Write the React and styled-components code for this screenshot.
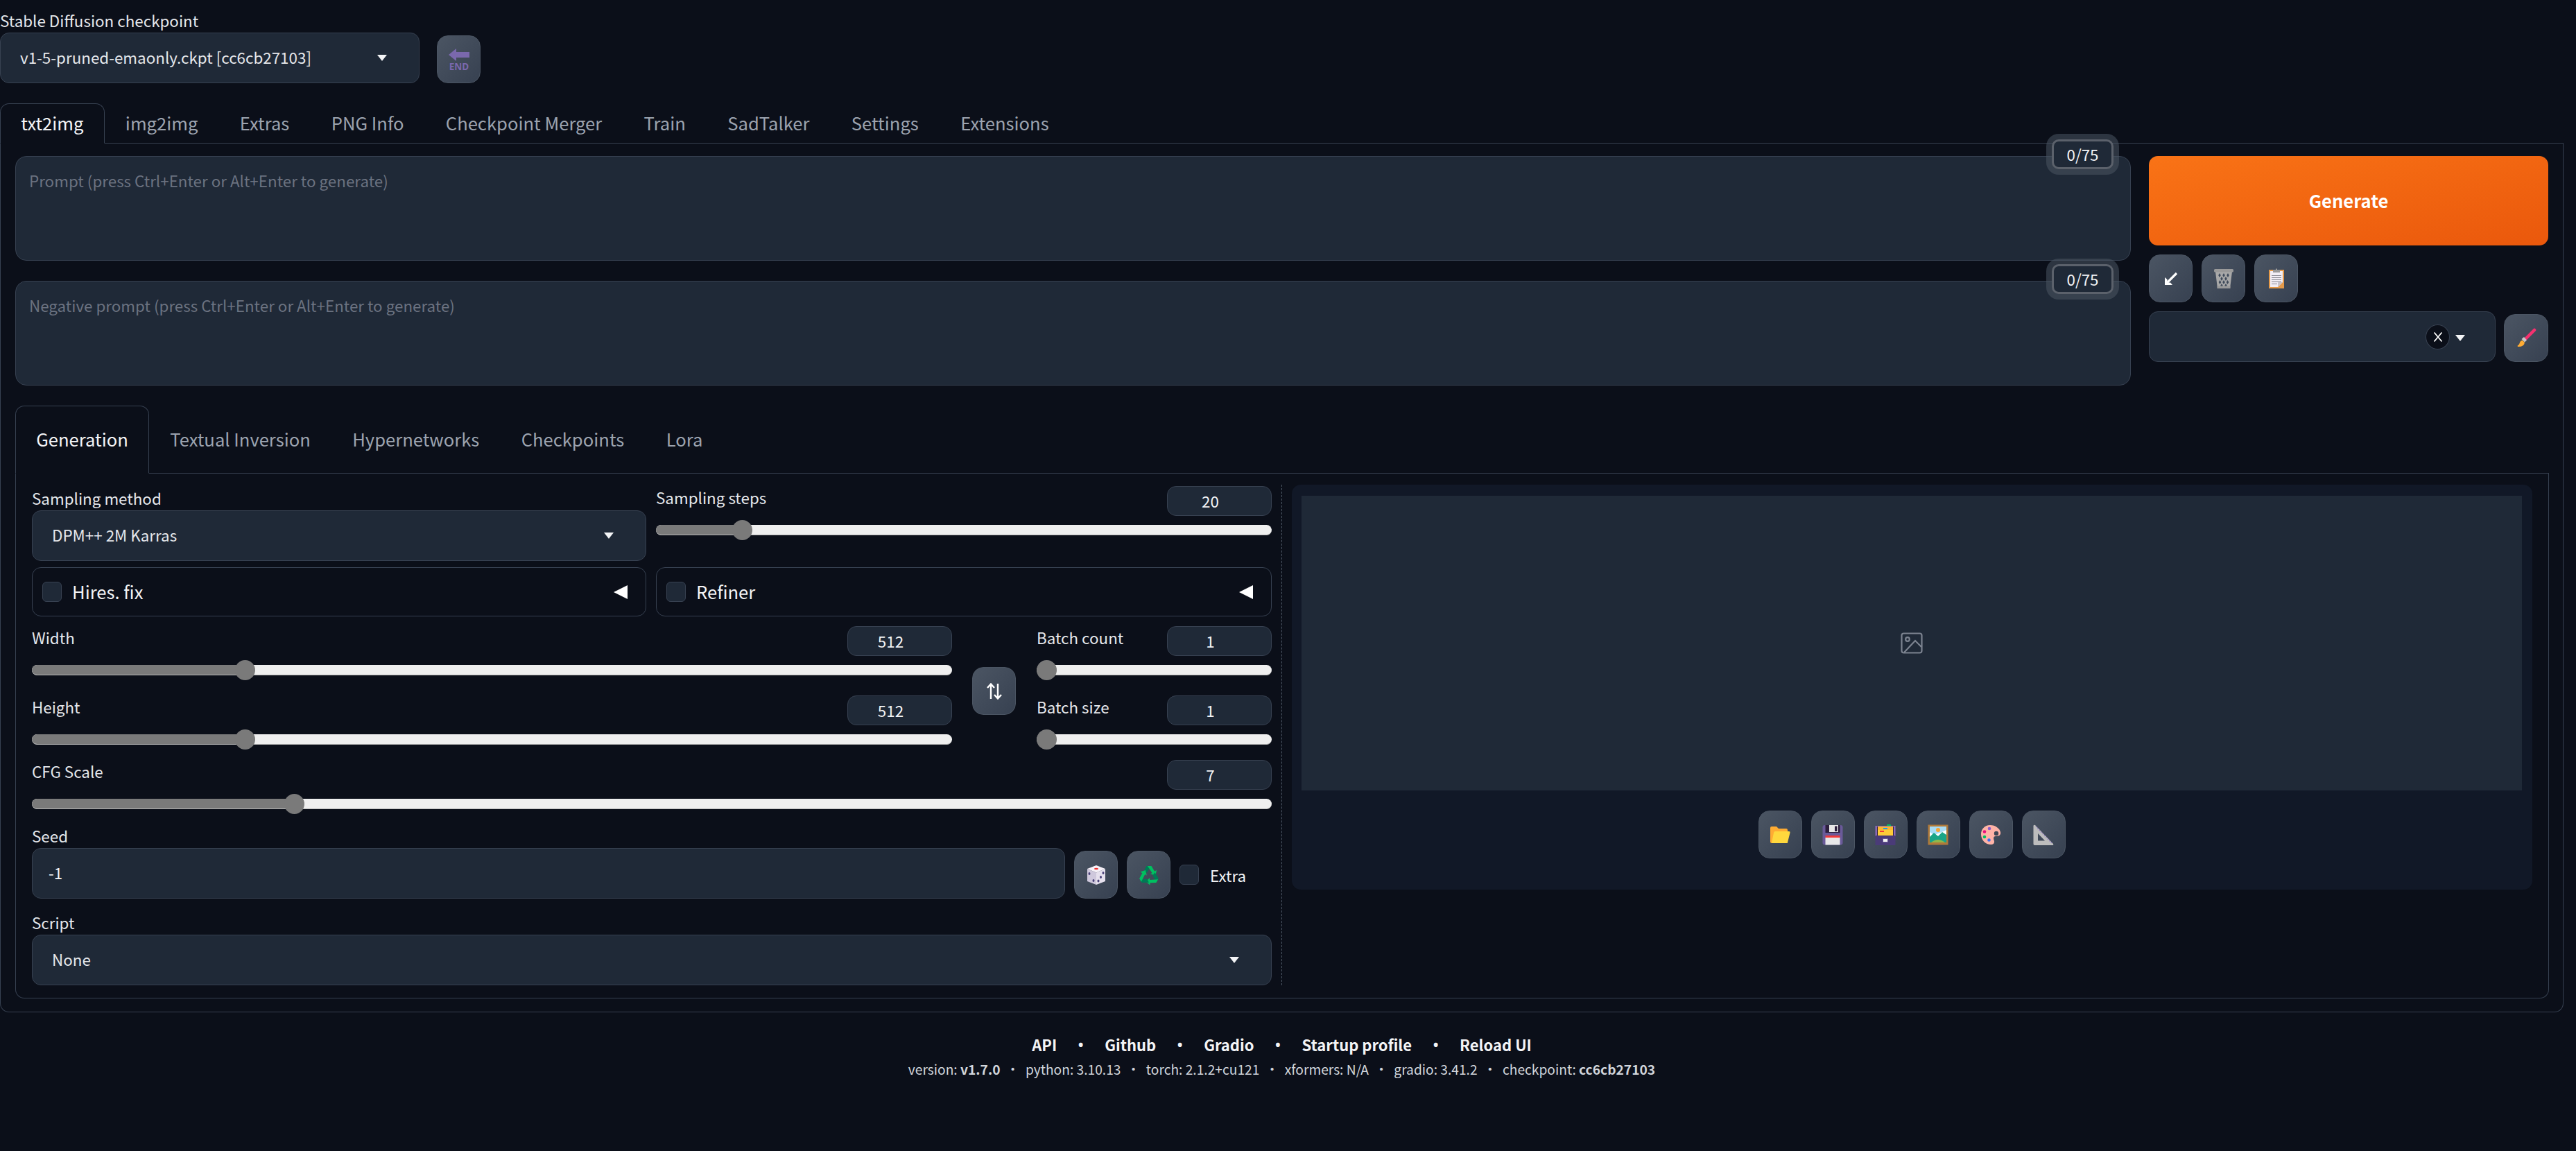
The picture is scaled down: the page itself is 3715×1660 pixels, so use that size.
import React from 'react';
import styled, { createGlobalStyle } from 'styled-components';

const GlobalStyle = createGlobalStyle`
    html, body {
        margin: 0;
        padding: 0;
        background: #0b0f19;
    }
    body {
        width: 3715px;
        height: 1660px;
        overflow: hidden;
        font-family: "Noto Sans CJK SC", "Noto Sans", sans-serif;
        font-size: 22.4px;
        color: #e5e7eb;
    }
    * {
        box-sizing: border-box;
    }
`;

const Page = styled.div`
    padding-top: 18px;
`;

const Label = styled.div`
    padding-bottom: 5px;
    line-height: 23px;
    margin-bottom: 1px;
    white-space: nowrap;
`;

const TopRow = styled.div`
    display: flex;
    align-items: flex-end;
    gap: 25px;
`;

const Select = styled.div`
    display: flex;
    align-items: center;
    justify-content: space-between;
    width: ${props => props.$width || '100%'};
    height: 73px;
    padding: 0 ${props => props.$right || 46}px 3px 28px;
    background: #1f2937;
    border: 1px solid #374151;
    border-radius: 13px;
    color: #e5e7eb;
    white-space: nowrap;
`;

const Caret = styled.span`
    width: 0;
    height: 0;
    margin-top: 3px;
    border-left: 7px solid transparent;
    border-right: 7px solid transparent;
    border-top: 9px solid #f3f4f6;
`;

const ToolButton = styled.button`
    display: flex;
    align-items: center;
    justify-content: center;
    flex: none;
    width: ${props => props.$width || 63}px;
    height: 69px;
    padding: 0;
    background: linear-gradient(to bottom right, #4b5563, #374151);
    border: 1px solid #4b5563;
    border-radius: 16px;
`;

const TabBar = styled.div`
    display: flex;
    height: ${props => props.$height}px;
    margin-top: ${props => props.$top}px;
    margin-right: ${props => props.$outdent || 0}px;
    border-bottom: 1px solid #374151;
`;

const Tab = styled.div`
    display: flex;
    align-items: center;
    height: ${props => props.$height}px;
    padding: 0 29.2px 3px;
    font-size: 25.6px;
    white-space: nowrap;
    color: ${props => props.$active ? '#f3f4f6' : '#9ca3af'};
    border: 1px solid ${props => props.$active ? '#374151' : 'transparent'};
    border-bottom: 1px solid ${props => props.$active ? '#0b0f19' : 'transparent'};
    border-radius: 13px 13px 0 0;
`;

const Panel = styled.div`
    width: 3697px;
    padding: 18px 20px 19px 21px;
    border: 1px solid #374151;
    border-top: 0;
    border-radius: 0 0 13px 13px;
`;

const PromptRow = styled.div`
    display: flex;
    gap: 26px;
`;

const PromptColumn = styled.div`
    display: flex;
    flex-direction: column;
    gap: 29px;
    width: 3051px;
`;

const PromptBox = styled.div`
    position: relative;
    height: 151px;
`;

const PromptArea = styled.textarea`
    display: block;
    width: 100%;
    height: 100%;
    padding: 21px 19px;
    resize: none;
    font: inherit;
    line-height: 26px;
    color: #e5e7eb;
    background: #1f2937;
    border: 1px solid #374151;
    border-radius: 16px;
    outline: none;
    &::placeholder {
        color: #6b7280;
        opacity: 1;
    }
`;

const TokenCounter = styled.div`
    position: absolute;
    top: -24px;
    right: 25px;
    display: flex;
    align-items: center;
    justify-content: center;
    width: 89px;
    height: 43px;
    padding-bottom: 2px;
    background: #1f2937;
    border: 3px solid #5b616b;
    border-radius: 10px;
    box-shadow: 0 0 0 8px rgba(75, 85, 99, 0.55);
    color: #f3f4f6;
`;

const ActionColumn = styled.div`
    display: flex;
    flex-direction: column;
    gap: 13px;
    width: 576px;
`;

const GenerateButton = styled.button`
    height: 129px;
    padding: 0 0 3px;
    font: inherit;
    font-size: 25.6px;
    font-weight: 600;
    color: #fff;
    background: linear-gradient(to bottom right, #f97316, #ea580c);
    border: 0;
    border-radius: 13px;
`;

const ToolRow = styled.div`
    display: flex;
    align-items: flex-end;
    gap: ${props => props.$gap}px;
`;

const StyleControls = styled.div`
    display: flex;
    align-items: center;
    gap: 8px;
    margin-top: 3px;
`;

const ClearButton = styled.span`
    display: flex;
    align-items: center;
    justify-content: center;
    width: 35px;
    height: 36px;
    background: #0b0f19;
    border: 1px solid #374151;
    border-radius: 50%;
`;

const SubPanel = styled.div`
    display: flex;
    padding: 16px 23px 18px 23px;
    border: 1px solid #374151;
    border-top: 0;
    border-radius: 0 0 13px 13px;
`;

const SettingsColumn = styled.div`
    flex: none;
    width: 1803px;
    margin-right: 14px;
    padding: 2px 14px 0 0;
    border-right: 1px dashed #4b5563;
`;

const TwoColumns = styled.div`
    display: grid;
    grid-template-columns: 886px 888px;
    gap: 9px 14px;
`;

const SamplerField = styled.div`
    padding-top: 6px;
`;

const Accordion = styled.div`
    display: flex;
    align-items: center;
    height: 71px;
    padding: 0 26px 0 14px;
    border: 1px solid #374151;
    border-radius: 13px;
    font-size: 25.6px;
    color: #f3f4f6;
`;

const AccordionTitle = styled.span`
    position: relative;
    top: -1px;
    margin-left: -1px;
`;

const Checkbox = styled.span`
    flex: none;
    width: 28px;
    height: 29px;
    margin-right: 16px;
    background: #1f2937;
    border: 1px solid #374151;
    border-radius: 6px;
`;

const CollapseMark = styled.span`
    margin-left: auto;
    width: 0;
    height: 0;
    border-top: 10px solid transparent;
    border-bottom: 10px solid transparent;
    border-right: 20px solid #fff;
`;

const SliderField = styled.div`
    margin-top: ${props => props.$top || 0}px;
`;

const SliderHead = styled.div`
    display: flex;
    align-items: center;
    justify-content: space-between;
    height: 43px;
    margin-bottom: 6px;
`;

const SliderLabel = styled.span`
    padding-bottom: 11px;
`;

const NumberBox = styled.div`
    display: flex;
    align-items: center;
    justify-content: center;
    width: 151px;
    height: 43px;
    padding: 0 26px 2px 0;
    background: #1f2937;
    border: 1px solid #374151;
    border-radius: 13px;
    color: #f3f4f6;
`;

const SliderRail = styled.div`
    position: relative;
    height: 29px;
`;

const SliderTrack = styled.div`
    position: absolute;
    top: 7px;
    left: 0;
    right: 0;
    height: 15px;
    background: #efefef;
    border-bottom: 1px solid #b5b5b5;
    border-radius: 8px;
    overflow: hidden;
`;

const SliderFill = styled.div`
    height: 100%;
    background: #7a7a7a;
`;

const SliderThumb = styled.div`
    position: absolute;
    top: 0;
    width: 29px;
    height: 29px;
    background: #7a7a7a;
    border-radius: 50%;
`;

const DimensionRow = styled.div`
    display: flex;
    align-items: flex-start;
    margin-top: 14px;
`;

const DimensionColumn = styled.div`
    flex: none;
    width: ${props => props.$width}px;
`;

const SwapSlot = styled.div`
    flex: none;
    margin: 59px 30px 0 29px;
`;

const SeedRow = styled.div`
    display: flex;
    align-items: flex-end;
    gap: 13px;
`;

const SeedInput = styled.div`
    display: flex;
    align-items: center;
    width: 1490px;
    height: 73px;
    padding: 0 0 3px 23px;
    background: #1f2937;
    border: 1px solid #374151;
    border-radius: 13px;
    color: #f3f4f6;
`;

const ExtraToggle = styled.div`
    display: flex;
    align-items: center;
    height: 69px;
    font-size: 22.4px;
    color: #f3f4f6;
`;

const FieldGroup = styled.div`
    margin-top: ${props => props.$top}px;
`;

const OutputPanel = styled.div`
    flex: none;
    width: 1789px;
    height: 584px;
    padding: 16px 15px 0 14px;
    background: #111827;
    border-radius: 13px;
`;

const ImagePlaceholder = styled.div`
    display: flex;
    align-items: center;
    justify-content: center;
    height: 425px;
    background: #1f2937;
`;

const OutputTools = styled.div`
    display: flex;
    justify-content: center;
    gap: 13px;
    margin-top: 29px;
`;

const Footer = styled.footer`
    margin-top: 33px;
    width: 3697px;
    text-align: center;
`;

const FooterLinks = styled.div`
    display: flex;
    justify-content: center;
    gap: 30px;
    height: 27px;
    line-height: 27px;
    font-size: 22px;
    font-weight: 600;
    color: #f3f4f6;
`;

const FooterDot = styled.span`
    width: 9px;
    font-family: "Noto Sans", sans-serif;
    text-align: center;
`;

const Versions = styled.div`
    margin-top: 10px;
    line-height: 24px;
    font-size: 19.2px;
    color: #d1d5db;
`;

const Slider = ({ pct }) => (
    <SliderRail>
        <SliderTrack>
            <SliderFill style={{ width: `${pct}%` }} />
        </SliderTrack>
        <SliderThumb style={{ left: `calc((100% - 29px) * ${pct / 100})` }} />
    </SliderRail>
);

const SliderControl = ({ label, value, pct, top }) => (
    <SliderField $top={top}>
        <SliderHead>
            <SliderLabel>{label}</SliderLabel>
            <NumberBox>{value}</NumberBox>
        </SliderHead>
        <Slider pct={pct} />
    </SliderField>
);

// Emoji in the original, redrawn as small svgs
const EndIcon = () => (
    <svg width="32" height="34" viewBox="0 0 32 34">
        <path d="M1 10 L12 1 V6 H31 V14 H12 V19Z" fill="#7a68ad" />
        <text x="16" y="32" textAnchor="middle" fontSize="13.500" fontWeight="700" fill="#7a68ad" fontFamily="Noto Sans">END</text>
    </svg>
);

const ArrowIcon = () => (
    <svg width="22" height="22" viewBox="0 0 22 22">
        <path d="M19 3 L5 17" stroke="#fff" strokeWidth="3.200" />
        <path d="M2 9 V20 H13 L10 16.500 H5.500 V12Z" fill="#fff" />
    </svg>
);

const TrashIcon = () => (
    <svg width="30" height="30" viewBox="0 0 30 30">
        <path d="M3 5 H27 L24 29 H6Z" fill="#a8a8a8" />
        <g fill="#3f4a5a">
            {[[9, 10], [15, 10], [21, 10], [12, 15], [18, 15], [9.500, 20], [15, 20], [20.500, 20], [12, 25], [18, 25]].map(([x, y]) => (
                <path key={`${x}-${y}`} d={`M${x} ${y - 3} L${x + 1.800} ${y} L${x} ${y + 3} L${x - 1.800} ${y}Z`} />
            ))}
        </g>
        <rect x="1" y="1" width="28" height="4.500" rx="1.500" fill="#9a9a9a" />
        <rect x="5.500" y="25.500" width="19" height="3.500" fill="#9a9a9a" />
    </svg>
);

const ClipboardIcon = () => (
    <svg width="30" height="30" viewBox="0 0 30 30">
        <rect x="4" y="2" width="22" height="27" fill="#e59a4a" />
        <path d="M6 4 H24 V20 L17 27 H6Z" fill="#f2eef6" />
        <path d="M24 20 L17 27 V21 Q17 20 18 20Z" fill="#c9c4cc" />
        <rect x="10" y="2" width="10" height="4" fill="#9a9a9a" />
        <rect x="14" y="0.500" width="2" height="2" fill="#9a9a9a" />
        <g fill="#85858f">
            <rect x="8" y="10" width="14" height="1" />
            <rect x="8" y="13" width="14" height="1" />
            <rect x="8" y="16" width="14" height="1" />
            <rect x="8" y="19" width="14" height="1" />
            <rect x="8" y="22" width="8" height="1" />
        </g>
    </svg>
);

const BrushIcon = () => (
    <svg width="30" height="30" viewBox="0 0 30 30">
        <path d="M27 3 L13 17" stroke="#f5316f" strokeWidth="4.500" strokeLinecap="round" />
        <path d="M8.500 16 L12 13 L16 17.500 L13 20.500Z" fill="#c8c8c8" />
        <path d="M10 18 L13 21 Q12 27 4 27 Q2 27 3 25 Q5.500 24 6 21 Q7 18 10 18Z" fill="#ffac33" />
    </svg>
);

const SwapIcon = () => (
    <svg width="24" height="24" viewBox="0 0 24 24" fill="none" stroke="#fff" strokeWidth="2.400">
        <path d="M7 23 V2 M2 7 L7 1.500 L12 7" />
        <path d="M17 1 V22 M12 17 L17 22.500 L22 17" />
    </svg>
);

const DiceIcon = () => (
    <svg width="30" height="30" viewBox="0 0 30 30">
        <path d="M15 1 L28 6 L15 11.500 L2 6Z" fill="#f6f1f8" />
        <path d="M2 6 L15 11.500 V29 L2 24Z" fill="#cfc8dc" />
        <path d="M28 6 L15 11.500 V29 L28 24Z" fill="#e6e0ed" />
        <ellipse cx="15" cy="6" rx="3" ry="1.300" fill="#f0302f" />
        <g fill="#4b4279">
            <ellipse cx="5" cy="13" rx="1.500" ry="2" />
            <ellipse cx="11" cy="23" rx="1.500" ry="2" />
            <ellipse cx="25" cy="12" rx="1.500" ry="2" />
            <ellipse cx="21.500" cy="18" rx="1.500" ry="2" />
            <ellipse cx="18" cy="23.500" rx="1.500" ry="2" />
        </g>
    </svg>
);

const RecycleArrow = ({ turn }) => (
    <g transform={`rotate(${turn} 15 16)`}>
        <path d="M6.500 11 L11.500 2 H17 L12.500 11.500Z" fill="#007a55" />
        <path d="M13 2 H18.500 L23 9.500 L26 8 L24.500 15.500 L17 13.500 L19.500 12Z" fill="#00c060" />
    </g>
);

const RecycleIcon = () => (
    <svg width="30" height="30" viewBox="0 0 30 30">
        <RecycleArrow turn={0} />
        <RecycleArrow turn={120} />
        <RecycleArrow turn={240} />
    </svg>
);

const FolderIcon = () => (
    <svg width="30" height="30" viewBox="0 0 30 30">
        <path d="M1 5 Q1 3 3 3 H10 L13 6 H24 Q26 6 26 8 V27 H3 Q1 27 1 25Z" fill="#ffac33" />
        <path d="M8 10 H28 Q30 10 29.500 12 L26 26 Q25.500 27 24 27 H3 L6 12 Q6.500 10 8 10Z" fill="#ffd83d" />
    </svg>
);

const FloppyIcon = () => (
    <svg width="30" height="30" viewBox="0 0 30 30">
        <rect x="0.500" y="1" width="29" height="28.500" rx="3" fill="#6a5a99" />
        <rect x="4.500" y="1" width="21" height="11" fill="#2c1f3d" />
        <rect x="10" y="1" width="13" height="10" fill="#e8e8e8" />
        <rect x="18" y="2.500" width="3.500" height="7.500" fill="#2c1f3d" />
        <rect x="4.500" y="16" width="21" height="3" fill="#f03a3a" />
        <rect x="4.500" y="19" width="21" height="10.500" fill="#e8e8e8" />
    </svg>
);

const CardBoxIcon = () => (
    <svg width="30" height="30" viewBox="0 0 30 30">
        <rect x="17" y="0" width="6" height="3" rx="1" fill="#00c060" />
        <rect x="0.500" y="2" width="29" height="15" fill="#8b69b8" />
        <rect x="3" y="3" width="24" height="14" fill="#2c1f3d" />
        <rect x="4" y="3" width="22" height="14" fill="#fbb731" />
        <rect x="4" y="8" width="22" height="9" fill="#ffd83d" opacity="0.600" />
        <rect x="12" y="5" width="6" height="2" fill="#1aa0e8" />
        <rect x="7" y="9" width="6" height="2" fill="#f03a3a" />
        <rect x="0.500" y="16" width="29" height="14" rx="1" fill="#4a3b78" />
        <rect x="11" y="20" width="8" height="6" fill="#6a5a99" />
        <rect x="12" y="21" width="6" height="4" fill="#f2f2f2" />
    </svg>
);

const PictureIcon = () => (
    <svg width="30" height="30" viewBox="0 0 30 30">
        <rect x="0.500" y="0.500" width="29" height="29" fill="#b07a3a" />
        <rect x="3" y="3" width="24" height="23" fill="#a8dcf5" />
        <path d="M3 11 L9 15 L18 12 L27 8 V26 H3Z" fill="#fff" />
        <circle cx="15" cy="8" r="3" fill="#f4a63a" />
        <path d="M3 18 L9 12 L15 17 L21 11 L27 15 V26 H3Z" fill="#1aa588" />
        <path d="M5 26 Q15 18 25 26Z" fill="#90b84a" />
    </svg>
);

const PaletteIcon = () => (
    <svg width="30" height="30" viewBox="0 0 30 30">
        <path d="M14 1 C22 1 28 6 29 11 C30 16 26 17 22 17 C18 17 19 21 20 24 C20.500 28 18 29 15 29 C8 29 1 23 1 14 C1 7 6 1 14 1Z" fill="#ffb3a7" />
        <circle cx="23" cy="13" r="3.200" fill="#3f4654" />
        <circle cx="13" cy="6" r="2.300" fill="#8c5cc8" />
        <circle cx="6" cy="10.500" r="2.300" fill="#ea0f7a" />
        <circle cx="6" cy="18" r="2.300" fill="#00c060" />
        <circle cx="12.500" cy="22.500" r="2.300" fill="#3b6cf0" />
    </svg>
);

const RulerIcon = () => (
    <svg width="30" height="30" viewBox="0 0 30 30">
        <path fillRule="evenodd" d="M0.500 2 Q1 0 3 1 L29 28 Q30 30 28 30 H2 Q0.500 30 0.500 28Z M7 13 V23.500 H17Z" fill="#bdbdbd" />
        <path d="M4 3 L28 28" stroke="#8f7ac0" strokeWidth="1.500" strokeDasharray="1.500 2" fill="none" />
    </svg>
);

const ImageIcon = () => (
    <svg width="32" height="31" viewBox="0 0 32 31" fill="none" stroke="#7c8390" strokeWidth="2.200">
        <rect x="1.500" y="1.500" width="29" height="28" rx="3" />
        <circle cx="10" cy="10" r="2.800" />
        <path d="M5 29 L21 12 L30 21" />
    </svg>
);

const CloseIcon = () => (
    <svg width="14" height="16" viewBox="0 0 14 16" stroke="#fff" strokeWidth="1.800">
        <path d="M1.500 1.500 L12.500 14.500 M12.500 1.500 L1.500 14.500" />
    </svg>
);

const mainTabs = ['txt2img', 'img2img', 'Extras', 'PNG Info', 'Checkpoint Merger', 'Train', 'SadTalker', 'Settings', 'Extensions'];
const subTabs = ['Generation', 'Textual Inversion', 'Hypernetworks', 'Checkpoints', 'Lora'];
const outputTools = [FolderIcon, FloppyIcon, CardBoxIcon, PictureIcon, PaletteIcon, RulerIcon];
const footerLinks = ['API', 'Github', 'Gradio', 'Startup profile', 'Reload UI'];

const App = () => (
    <Page>
        <GlobalStyle />
        <Label>Stable Diffusion checkpoint</Label>
        <TopRow>
            <Select $width="605px" $right="46">
                v1-5-pruned-emaonly.ckpt [cc6cb27103]
                <Caret />
            </Select>
            <ToolButton><EndIcon /></ToolButton>
        </TopRow>

        <TabBar $top={29} $height={58} $outdent={18}>
            {mainTabs.map((name, i) => <Tab key={name} $active={i === 0} $height={58}>{name}</Tab>)}
        </TabBar>

        <Panel>
            <PromptRow>
                <PromptColumn>
                    <PromptBox>
                        <PromptArea placeholder="Prompt (press Ctrl+Enter or Alt+Enter to generate)" />
                        <TokenCounter>0/75</TokenCounter>
                    </PromptBox>
                    <PromptBox>
                        <PromptArea placeholder="Negative prompt (press Ctrl+Enter or Alt+Enter to generate)" />
                        <TokenCounter>0/75</TokenCounter>
                    </PromptBox>
                </PromptColumn>
                <ActionColumn>
                    <GenerateButton>Generate</GenerateButton>
                    <ToolRow $gap={13}>
                        <ToolButton><ArrowIcon /></ToolButton>
                        <ToolButton><TrashIcon /></ToolButton>
                        <ToolButton><ClipboardIcon /></ToolButton>
                    </ToolRow>
                    <ToolRow $gap={12}>
                        <Select $width="500px" $right="43">
                            <span />
                            <StyleControls>
                                <ClearButton><CloseIcon /></ClearButton>
                                <Caret />
                            </StyleControls>
                        </Select>
                        <ToolButton $width={64}><BrushIcon /></ToolButton>
                    </ToolRow>
                </ActionColumn>
            </PromptRow>

            <TabBar $top={29} $height={98}>
                {subTabs.map((name, i) => <Tab key={name} $active={i === 0} $height={98}>{name}</Tab>)}
            </TabBar>

            <SubPanel>
                <SettingsColumn>
                    <TwoColumns>
                        <SamplerField>
                            <Label>Sampling method</Label>
                            <Select>
                                DPM++ 2M Karras
                                <Caret />
                            </Select>
                        </SamplerField>
                        <SliderControl label="Sampling steps" value="20" pct={12.75} />
                        <Accordion><Checkbox /><AccordionTitle>Hires. fix</AccordionTitle><CollapseMark /></Accordion>
                        <Accordion><Checkbox /><AccordionTitle>Refiner</AccordionTitle><CollapseMark /></Accordion>
                    </TwoColumns>

                    <DimensionRow>
                        <DimensionColumn $width={1327}>
                            <SliderControl label="Width" value="512" pct={22.6} />
                            <SliderControl label="Height" value="512" pct={22.6} top={22} />
                        </DimensionColumn>
                        <SwapSlot>
                            <ToolButton><SwapIcon /></ToolButton>
                        </SwapSlot>
                        <DimensionColumn $width={339}>
                            <SliderControl label="Batch count" value="1" pct={0} />
                            <SliderControl label="Batch size" value="1" pct={0} top={22} />
                        </DimensionColumn>
                    </DimensionRow>

                    <SliderControl label="CFG Scale" value="7" pct={20.7} top={15} />

                    <FieldGroup $top={20}>
                        <Label>Seed</Label>
                        <SeedRow>
                            <SeedInput>-1</SeedInput>
                            <ToolButton><DiceIcon /></ToolButton>
                            <ToolButton><RecycleIcon /></ToolButton>
                            <ExtraToggle><Checkbox />Extra</ExtraToggle>
                        </SeedRow>
                    </FieldGroup>

                    <FieldGroup $top={23}>
                        <Label>Script</Label>
                        <Select>
                            None
                            <Caret />
                        </Select>
                    </FieldGroup>
                </SettingsColumn>

                <OutputPanel>
                    <ImagePlaceholder><ImageIcon /></ImagePlaceholder>
                    <OutputTools>
                        {outputTools.map((Icon, i) => <ToolButton key={i}><Icon /></ToolButton>)}
                    </OutputTools>
                </OutputPanel>
            </SubPanel>
        </Panel>

        <Footer>
            <FooterLinks>
                {footerLinks.map((item, i) => (
                    <React.Fragment key={item}>
                        {i > 0 && <FooterDot>•</FooterDot>}
                        <span>{item}</span>
                    </React.Fragment>
                ))}
            </FooterLinks>
            <Versions>
                version: <b>v1.7.0</b>&nbsp; • &nbsp;python: 3.10.13&nbsp; • &nbsp;torch: 2.1.2+cu121&nbsp; • &nbsp;xformers: N/A&nbsp; • &nbsp;gradio: 3.41.2&nbsp; • &nbsp;checkpoint: <b>cc6cb27103</b>
            </Versions>
        </Footer>
    </Page>
);

export default App;
